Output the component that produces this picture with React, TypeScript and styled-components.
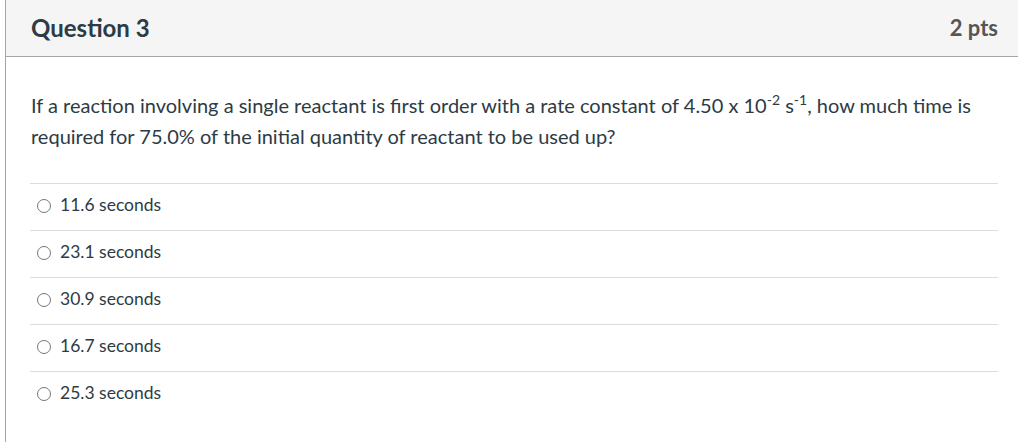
import React from 'react';
import styled, { createGlobalStyle } from 'styled-components';

const GlobalStyle = createGlobalStyle`
  html, body {
    margin: 0;
    padding: 0;
    background: #fff;
    overflow: hidden;
  }
  body {
    font-family: Lato, "Open Sans", sans-serif;
    color: #2d3b45;
  }
`;

const Panel = styled.div`
  margin-left: 5px;
  border-left: 1px solid #a5a5a5;
  min-height: 442px;
  box-sizing: border-box;
`;

const Header = styled.div`
  display: flex;
  align-items: center;
  justify-content: space-between;
  height: 57px;
  box-sizing: border-box;
  padding: 0 20px 0 25px;
  background: #f5f5f5;
  border-bottom: 1px solid #a5a5a5;
`;

const Title = styled.h2`
  margin: 0;
  font-size: 24px;
  font-weight: 700;
  color: #2d3b45;
  padding-bottom: 2px;
`;

const Points = styled.div`
  font-size: 22px;
  font-weight: 700;
  color: #555;
  padding-bottom: 2px;
`;

const Body = styled.div`
  padding: 33px 20px 0 24px;
`;

const QuestionText = styled.p`
  margin: 0 0 31px 1px;
  font-size: 20px;
  line-height: 31px;
  color: #2d3b45;

  sup {
    font-size: 14px;
    line-height: 0;
  }
`;

const Answers = styled.div`
  display: flex;
  flex-direction: column;
`;

const Answer = styled.label`
  display: flex;
  align-items: center;
  gap: 9px;
  height: 47px;
  box-sizing: border-box;
  padding: 11px 0 15px 7px;
  line-height: 20px;
  border-top: 1px solid #dcdcdc;
  font-size: 17.5px;
  color: #2d3b45;
  cursor: pointer;
`;

const Radio = styled.span`
  width: 12px;
  height: 12px;
  border: 1.5px solid #777;
  border-radius: 50%;
  flex-shrink: 0;
  margin-top: 1px;
`;

const answers = ['11.6 seconds', '23.1 seconds', '30.9 seconds', '16.7 seconds', '25.3 seconds'];

export default function App() {
  return (
    <>
      <GlobalStyle />
      <Panel>
        <Header>
          <Title>Question 3</Title>
          <Points>2 pts</Points>
        </Header>
        <Body>
          <QuestionText>
            If a reaction involving a single reactant is first order with a rate constant of 4.50 x 10<sup>-2</sup> s<sup>-1</sup>, how much time is required for 75.0% of the initial quantity of reactant to be used up?
          </QuestionText>
          <Answers>
            {answers.map((a) => (
              <Answer key={a}>
                <Radio />
                {a}
              </Answer>
            ))}
          </Answers>
        </Body>
      </Panel>
    </>
  );
}
